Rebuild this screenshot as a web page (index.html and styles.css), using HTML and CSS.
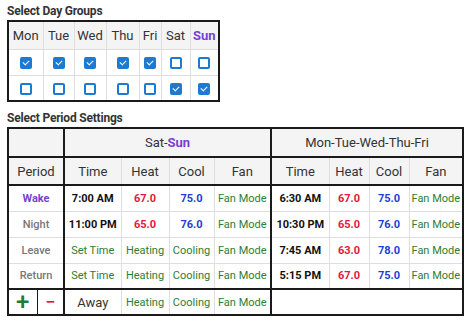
FILE: index.html
```html
<!DOCTYPE html>
<html lang="en">
<head>
    <meta charset="UTF-8">
    <title>Schedule</title>
    <link rel="stylesheet" href="styles.css">
</head>
<body>

    <!-- Day Groups -->
    <h2 class="section-title">Select Day Groups</h2>
    <table class="days">
        <colgroup>
            <col style="width:35px"><col style="width:31px"><col style="width:32px"><col style="width:33px">
            <col style="width:22px"><col style="width:29px"><col style="width:29px">
        </colgroup>
        <tr class="head">
            <th>Mon</th><th>Tue</th><th>Wed</th><th>Thu</th><th>Fri</th><th>Sat</th><th class="sun">Sun</th>
        </tr>
        <tr>
            <td><span class="box checked"></span></td>
            <td><span class="box checked"></span></td>
            <td><span class="box checked"></span></td>
            <td><span class="box checked"></span></td>
            <td><span class="box checked"></span></td>
            <td><span class="box"></span></td>
            <td><span class="box"></span></td>
        </tr>
        <tr>
            <td><span class="box"></span></td>
            <td><span class="box"></span></td>
            <td><span class="box"></span></td>
            <td><span class="box"></span></td>
            <td><span class="box"></span></td>
            <td><span class="box checked"></span></td>
            <td><span class="box checked"></span></td>
        </tr>
    </table>

    <!-- Period Settings -->
    <h2 class="section-title second">Select Period Settings</h2>
    <table class="periods">
        <colgroup>
            <col style="width:29px"><col style="width:27px">
            <col style="width:57px"><col style="width:48px"><col style="width:45px"><col style="width:57px">
            <col style="width:58px"><col style="width:40px"><col style="width:40px"><col style="width:54px">
        </colgroup>
        <tr class="head group-row">
            <th colspan="2" class="split"></th>
            <th colspan="4" class="split">Sat-<span class="sun">Sun</span></th>
            <th colspan="4">Mon-Tue-Wed-Thu-Fri</th>
        </tr>
        <tr class="head col-row">
            <th colspan="2" class="split">Period</th>
            <th>Time</th><th>Heat</th><th>Cool</th><th class="split">Fan</th>
            <th>Time</th><th>Heat</th><th>Cool</th><th>Fan</th>
        </tr>
        <tr>
            <td colspan="2" class="split period wake">Wake</td>
            <td class="time">7:00 AM</td><td class="heat">67.0</td><td class="cool">75.0</td><td class="fan split">Fan Mode</td>
            <td class="time">6:30 AM</td><td class="heat">67.0</td><td class="cool">75.0</td><td class="fan">Fan Mode</td>
        </tr>
        <tr>
            <td colspan="2" class="split period">Night</td>
            <td class="time">11:00 PM</td><td class="heat">65.0</td><td class="cool">76.0</td><td class="fan split">Fan Mode</td>
            <td class="time">10:30 PM</td><td class="heat">65.0</td><td class="cool">76.0</td><td class="fan">Fan Mode</td>
        </tr>
        <tr>
            <td colspan="2" class="split period">Leave</td>
            <td class="fan">Set Time</td><td class="fan">Heating</td><td class="fan">Cooling</td><td class="fan split">Fan Mode</td>
            <td class="time">7:45 AM</td><td class="heat">63.0</td><td class="cool">78.0</td><td class="fan">Fan Mode</td>
        </tr>
        <tr>
            <td colspan="2" class="split period">Return</td>
            <td class="fan">Set Time</td><td class="fan">Heating</td><td class="fan">Cooling</td><td class="fan split">Fan Mode</td>
            <td class="time">5:15 PM</td><td class="heat">67.0</td><td class="cool">75.0</td><td class="fan">Fan Mode</td>
        </tr>
        <tr class="away-row">
            <td class="btn add">+</td>
            <td class="btn remove split">&minus;</td>
            <td class="away">Away</td><td class="fan">Heating</td><td class="fan">Cooling</td><td class="fan split">Fan Mode</td>
            <td colspan="4"></td>
        </tr>
    </table>

</body>
</html>
```

FILE: styles.css
```css
/* General Body Styling */
body {
    font-family: Roboto, "Liberation Sans", sans-serif;
    background-color: #fff;
    color: #333;
    margin: 0;
    padding: 4px 7px;
}

.section-title {
    font-size: 12px;
    font-weight: bold;
    color: #333;
    margin: 0 0 2px 0;
    line-height: 14px;
    letter-spacing: -0.2px;
}

.section-title.second {
    margin-top: 9px;
}

table {
    border-collapse: collapse;
    table-layout: fixed;
    border: 2px solid #1a1a1a;
}

th, td {
    border: 1px solid #dedede;
    text-align: center;
    padding: 0;
    white-space: nowrap;
    overflow: hidden;
}

.head th {
    background-color: #f4f4f4;
    font-weight: normal;
    font-size: 13px;
    color: #333;
}

.head .sun {
    color: #7a3fd1;
    font-weight: bold;
}

/* Day Groups */
.days {
    width: 211px;
}

.days tr.head {
    height: 28px;
}

.days tr {
    height: 26px;
}

.box {
    display: inline-block;
    width: 8px;
    height: 8px;
    border: 2px solid #1c7ad0;
    border-radius: 2px;
    vertical-align: middle;
    position: relative;
}

.box.checked {
    background-color: #1c7ad0;
}

.box.checked::after {
    content: "";
    position: absolute;
    left: 2px;
    top: 0px;
    width: 3px;
    height: 5px;
    border: solid #fff;
    border-width: 0 1.5px 1.5px 0;
    transform: rotate(45deg);
}

/* Period Settings */
.periods {
    width: 455px;
}

.periods tr {
    height: 26px;
}

.periods tr.group-row {
    height: 29px;
}

.periods tr.col-row {
    height: 28px;
}

.periods tr.head th {
    border-bottom: 2px solid #1a1a1a;
}

.periods .split {
    border-right: 2px solid #1a1a1a;
}

.periods td {
    font-size: 11px;
}

.period {
    color: #777;
    font-weight: 500;
}

.period.wake {
    color: #7a3fd1;
    font-weight: bold;
}

.time {
    color: #111;
    font-weight: bold;
}

.heat {
    color: #e2173b;
    font-weight: bold;
}

.cool {
    color: #1b3fd6;
    font-weight: bold;
}

.fan {
    color: #2e7d32;
}

/* Away Row */
.away-row {
    height: 29px;
}

.away-row td {
    border-top: 2px solid #1a1a1a;
}

.periods .btn {
    font-size: 24px;
    line-height: 20px;
    font-weight: 500;
}

.periods .btn.add {
    color: #1f7a34;
    border-right: 1px solid #1a1a1a;
}

.periods .btn.remove {
    color: #e2173b;
    font-size: 18px;
}

.periods .away {
    font-size: 13px;
    color: #333;
}
```
